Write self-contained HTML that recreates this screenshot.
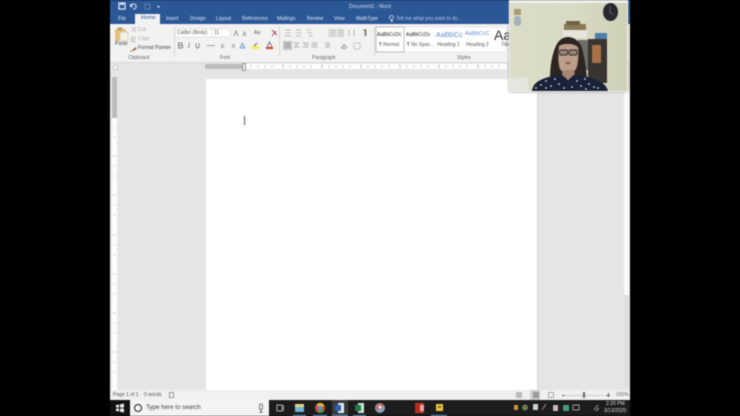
<!DOCTYPE html>
<html><head><meta charset="utf-8"><style>
html,body{margin:0;padding:0;background:#000;width:740px;height:416px;overflow:hidden}
body{position:relative;font-family:"Liberation Sans",sans-serif}
div{position:absolute;box-sizing:border-box}
.t{white-space:nowrap;line-height:1}
svg{position:absolute;left:0;top:0}
#w{left:0;top:0;width:740px;height:416px;filter:blur(.4px)}
</style></head><body><div id="w">
<div style="left:110px;top:0;width:520px;height:400px;background:#e6e5e6"></div>
<div style="left:110px;top:0;width:520px;height:24px;background:#2b5797"></div>
<div style="left:110px;top:24px;width:520px;height:38px;background:#f3f2f2"></div>
<div style="left:110px;top:62px;width:520px;height:1px;background:#d8d8d8"></div>
<div style="left:135px;top:14px;width:25px;height:10px;background:#f3f2f2"></div>
<div class="t" style="left:118px;top:17px;font-size:5px;color:#dfe6f2">File</div>
<div class="t" style="left:141px;top:16px;font-size:5.5px;color:#2b5797">Home</div>
<div class="t" style="left:166px;top:17px;font-size:5px;color:#dfe6f2">Insert</div>
<div class="t" style="left:190px;top:17px;font-size:5px;color:#dfe6f2">Design</div>
<div class="t" style="left:216px;top:17px;font-size:5px;color:#dfe6f2">Layout</div>
<div class="t" style="left:242px;top:17px;font-size:5px;color:#dfe6f2">References</div>
<div class="t" style="left:277px;top:17px;font-size:5px;color:#dfe6f2">Mailings</div>
<div class="t" style="left:307px;top:17px;font-size:5px;color:#dfe6f2">Review</div>
<div class="t" style="left:334px;top:17px;font-size:5px;color:#dfe6f2">View</div>
<div class="t" style="left:356px;top:17px;font-size:5px;color:#dfe6f2">MathType</div>
<div class="t" style="left:396px;top:17px;font-size:5px;color:#b9c9e2">Tell me what you want to do...</div>
<div class="t" style="left:349px;top:5px;font-size:5px;color:#d5deec">Document1 - Word</div>
<svg width="740" height="416" viewBox="0 0 740 416">
<rect x="119" y="3" width="6" height="6" fill="none" stroke="#e8eef7" stroke-width="1.2"/><rect x="120.5" y="3" width="3" height="2" fill="#e8eef7"/>
<path d="M131 7a2.6 2.6 0 1 1 2 2M130.500 4v2.500h2.500" fill="none" stroke="#e8eef7" stroke-width="1"/>
<rect x="145" y="4" width="5" height="5" fill="none" stroke="#6f8fbd" stroke-width=".8"/>
<path d="M157 6h3l-1.500 2z" fill="#dfe6f2"/>
<circle cx="391.500" cy="17.500" r="2" fill="none" stroke="#cfdcee" stroke-width=".8"/><path d="M391 20h1.500v2H391z" fill="#cfdcee"/>
<rect x="115" y="29" width="11" height="12" rx="1" fill="#e2c27a"/><rect x="120" y="32" width="8" height="9" fill="#f5f1e4" stroke="#bdb7a6" stroke-width=".5"/><rect x="117.500" y="27.500" width="5" height="2.500" fill="#b09a68"/>
<path d="M132 27l4 5M136 27l-4 5" stroke="#bdbcbc" stroke-width=".8"/>
<rect x="131" y="37" width="4" height="5" fill="#d9d8d8" stroke="#bcbcbc" stroke-width=".5"/>
<path d="M132 50l4-3 1 1-3 3z" fill="#8b6a3a"/><path d="M130 50.500l2-.5.500 1.500-2 .5z" fill="#c79e4a"/>
<rect x="175" y="29" width="55" height="8" fill="#fff" stroke="#d5d4d4" stroke-width=".6"/>
<rect x="211.500" y="29" width=".6" height="8" fill="#d5d4d4"/>
<path d="M234 36l2-5 2 5M243 36l1.500-4 1.500 4" fill="none" stroke="#777" stroke-width=".7"/>
<path d="M272 30l5 5M272 36l4-5" stroke="#b8405e" stroke-width="1"/>
<path d="M178.500 43h2.500a1.200 1.200 0 0 1 0 2.500h-2.500zM178.500 45.500h3a1.200 1.200 0 0 1 0 2.500h-3zM189.500 43l-1 5M196 43v3.500a1.500 1.500 0 0 0 3 0V43" fill="none" stroke="#666" stroke-width=".7"/>
<path d="M207 45.500h8" stroke="#888" stroke-width=".8"/>
<path d="M221 44l3 4M224 44l-3 4M232 44l3 4M235 44l-3 4" stroke="#777" stroke-width=".6"/>
<path d="M240 48l2.500-5 2.500 5z" fill="#cfe0f0" stroke="#5c8dc4" stroke-width=".7"/>
<rect x="252" y="46" width="7" height="3" fill="#f5ec4a"/><path d="M254 46l3-3" stroke="#667" stroke-width="1"/>
<path d="M267 47l2.500-5 2.500 5" fill="none" stroke="#555" stroke-width=".8"/><rect x="266" y="47" width="7" height="2" fill="#d03a2c"/>
<g stroke="#888" stroke-width=".6" fill="none">
<path d="M285 30h6M285 33h6M285 36h6M296 30h5M296 33h5M296 36h5M307 30h4M308 33h4M309 36h4"/>
<path d="M328 30h5M328 33h5M328 36h5M337 30h5M337 33h5M337 36h5"/>
<path d="M349 30v6M354 30v6"/>
</g>
<rect x="330" y="29" width="6" height="8" fill="#d4d3d3"/><rect x="338" y="29" width="6" height="8" fill="#d4d3d3"/>
<path d="M363 30h3v6M365 30v6" stroke="#555" stroke-width=".7" fill="none"/>
<rect x="283" y="41" width="9" height="9" fill="#c8c8c8"/>
<g stroke="#777" stroke-width=".6"><path d="M284.500 43h6M284.500 45h6M284.500 47h6M293.500 43h6M294.500 45h4M293.500 47h6M302.500 43h6M304 45h4.500M302.500 47h6M311.500 43h6M311.500 45h6M311.500 47h6M325 43h5M325 45h5M325 47h5"/></g>
<path d="M341 48l3-4 3 3-2 2z" fill="#cfcfcf" stroke="#777" stroke-width=".5"/>
<rect x="354" y="43" width="6" height="6" fill="none" stroke="#aaa" stroke-width=".6"/>
<g stroke="#c9c9c9" stroke-width=".6">
<path d="M174.500 26v30M279.500 26v30M374.500 26v30"/></g>
<rect x="376" y="27" width="130" height="25" fill="#fff" stroke="#dadada" stroke-width=".5"/>
<rect x="376" y="27" width="28" height="25" fill="#fff" stroke="#b0b0b0" stroke-width=".8"/>
</svg>
<div class="t" style="left:115px;top:42px;font-size:5px;color:#444">Paste</div>
<div class="t" style="left:138px;top:28px;font-size:5px;color:#aaa">Cut</div>
<div class="t" style="left:138px;top:37px;font-size:5px;color:#aaa">Copy</div>
<div class="t" style="left:138px;top:46px;font-size:5px;color:#444">Format Painter</div>
<div class="t" style="left:177px;top:31px;font-size:5px;color:#555">Calibri (Body)</div>
<div class="t" style="left:214px;top:31px;font-size:5px;color:#555">11</div>
<div class="t" style="left:254px;top:31px;font-size:5px;color:#555">Aa</div>
<div class="t" style="left:128px;top:56px;font-size:5px;color:#666">Clipboard</div>
<div class="t" style="left:220px;top:56px;font-size:5px;color:#666">Font</div>
<div class="t" style="left:312px;top:56px;font-size:5px;color:#666">Paragraph</div>
<div class="t" style="left:457px;top:56px;font-size:5px;color:#666">Styles</div>
<div class="t" style="left:377px;top:33px;font-size:5px;color:#222">AaBbCcDc</div>
<div class="t" style="left:406px;top:33px;font-size:5px;color:#222">AaBbCcDc</div>
<div class="t" style="left:436px;top:31px;font-size:7.300px;color:#5b8ec9">AaBbCc</div>
<div class="t" style="left:465px;top:32px;font-size:5.600px;color:#5b8ec9">AaBbCcC</div>
<div class="t" style="left:494px;top:28px;font-size:14px;color:#333">Aa</div>
<div class="t" style="left:379px;top:43px;font-size:5px;color:#555">¶ Normal</div>
<div class="t" style="left:407px;top:43px;font-size:5px;color:#555">¶ No Spac...</div>
<div class="t" style="left:437px;top:43px;font-size:5px;color:#555">Heading 1</div>
<div class="t" style="left:466px;top:43px;font-size:5px;color:#555">Heading 2</div>
<div class="t" style="left:501px;top:43px;font-size:5px;color:#555">Title</div>
<div style="left:205px;top:64px;width:302px;height:5px;background:#fdfdfd"></div>
<div style="left:205px;top:64px;width:39px;height:5px;background:#bdbcbc"></div>
<div style="left:242px;top:63px;width:4px;height:8px;border:1px solid #999;background:#eee"></div>
<svg width="740" height="416" viewBox="0 0 740 416"><g stroke="#999" stroke-width=".6">
<path d="M251 65.500v2M258 65.500v2M265 65.500v2M272 65.500v2M283 64.500v4M290 65.500v2M297 65.500v2M304 65.500v2M311 65.500v2M322 64.500v4M329 65.500v2M336 65.500v2M343 65.500v2M350 65.500v2M361 64.500v4M368 65.500v2M375 65.500v2M382 65.500v2M389 65.500v2M400 64.500v4M407 65.500v2M414 65.500v2M421 65.500v2M428 65.500v2M439 64.500v4M446 65.500v2M453 65.500v2M460 65.500v2M467 65.500v2M478 64.500v4M485 65.500v2M492 65.500v2M499 65.500v2"/>
</g></svg>
<div style="left:113px;top:65px;width:5px;height:5px;background:#fafafa;border:1px solid #c9c9c9"></div>
<div style="left:112px;top:77px;width:5px;height:313px;background:#fdfdfd"></div>
<div style="left:112px;top:77px;width:5px;height:41px;background:#bdbcbc"></div>
<svg width="740" height="416" viewBox="0 0 740 416"><g stroke="#aaa" stroke-width=".6">
<path d="M113.500 128h2M113.500 137h2M113 156h3M113.500 166h2M113.500 176h2M113 195h3M113.500 205h2M113.500 215h2M113 235h3M113.500 245h2M113.500 255h2M113 274h3M113.500 284h2M113.500 294h2M113 313h3M113.500 323h2M113.500 333h2M113 352h3M113.500 362h2M113.500 372h2"/>
</g></svg>
<div style="left:206px;top:79px;width:331px;height:311px;background:#fff"></div>
<div style="left:537px;top:79px;width:1px;height:311px;background:#dcdbdc"></div>
<div style="left:244px;top:116px;width:1px;height:9px;background:#555"></div>
<div style="left:624px;top:90px;width:5px;height:205px;background:#fafafa"></div>
<div style="left:624px;top:295px;width:5px;height:93px;background:#dfdedf"></div>
<div style="left:110px;top:390px;width:520px;height:10px;background:#f1f0f0"></div>
<div class="t" style="left:113px;top:393px;font-size:5px;color:#555">Page 1 of 1</div>
<div class="t" style="left:144px;top:393px;font-size:5px;color:#555">0 words</div>
<div style="left:169px;top:392px;width:5px;height:6px;border:1px solid #999"></div>
<div style="left:516px;top:392px;width:6px;height:6px;background:#bbb"></div>
<div style="left:530px;top:390px;width:10px;height:10px;background:#d0cfcf"></div>
<div style="left:533px;top:392px;width:6px;height:6px;background:#999"></div>
<div style="left:548px;top:392px;width:6px;height:6px;border:1px solid #aaa"></div>
<div style="left:562px;top:394.500px;width:3px;height:1px;background:#666"></div>
<div style="left:566px;top:395px;width:38px;height:1px;background:#ccc"></div>
<div style="left:583px;top:392px;width:2px;height:6px;background:#666"></div>
<div style="left:606px;top:393px;width:4px;height:4px;background:linear-gradient(#666,#666) center/4px 1px no-repeat,linear-gradient(#666,#666) center/1px 4px no-repeat"></div>
<div class="t" style="left:616px;top:393px;font-size:5px;color:#666">100%</div>
<div style="left:110px;top:400px;width:520px;height:16px;background:#1c1c1c"></div>
<div style="left:110px;top:400px;width:20px;height:16px;background:#111"></div>
<svg width="740" height="416" viewBox="0 0 740 416"><path d="M116 405l3-.5v3h-3zM120 404.300l4-.7v4h-4zM116 408.500h3v3l-3-.5zM120 408.500h4v4l-4-.7z" fill="#e8e8e8"/></svg>
<div style="left:130px;top:400px;width:139px;height:16px;background:#f3f3f3"></div>
<div style="left:134px;top:404px;width:8px;height:8px;border:1.300px solid #222;border-radius:50%"></div>
<div class="t" style="left:146px;top:405px;font-size:6.200px;color:#444">Type here to search</div>
<svg width="740" height="416" viewBox="0 0 740 416">
<rect x="259.500" y="404" width="3" height="5.500" rx="1.500" fill="none" stroke="#555" stroke-width=".8"/><path d="M261 409.500v2.500M259.500 412.300h3" stroke="#555" stroke-width=".8"/>
<rect x="277" y="405" width="5" height="6" fill="none" stroke="#ccc" stroke-width=".8"/><path d="M283.500 405v6" stroke="#ccc" stroke-width=".8"/>
<rect x="295" y="404" width="9" height="8" fill="#e8d480"/><rect x="295" y="407" width="9" height="5" fill="#6fb3d8"/>
<circle cx="320" cy="408" r="5" fill="#d5493b"/><path d="M320 408l4.500-2.500a5 5 0 0 0-8-1z" fill="#e0b93c"/><path d="M320 408l-2.500 4.300a5 5 0 0 0 6.800-1.800z" fill="#4a9e52"/><circle cx="320" cy="408" r="2" fill="#5a93d8"/>
<rect x="332" y="400" width="16" height="16" fill="#3a3a3c"/>
<rect x="338" y="403" width="6" height="10" fill="#dfe8f4"/><rect x="335" y="405" width="6" height="6" fill="#2b5fa8"/>
<rect x="358" y="403" width="6" height="10" fill="#cfe3d5"/><rect x="355" y="405" width="6" height="6" fill="#1f7a45"/>
<circle cx="380" cy="408" r="5" fill="#8aa0b8"/><path d="M376 410a5 5 0 0 1 8-5l-2 3z" fill="#d06060"/><circle cx="380" cy="407" r="1.500" fill="#eee"/>
<rect x="415" y="403" width="9" height="10" fill="#c8392b"/><rect x="417" y="405" width="7" height="6" fill="#e9a79f"/><rect x="415" y="404" width="5" height="8" fill="#b5281c"/>
<rect x="436" y="404" width="7" height="7" fill="#e6c840"/><rect x="438" y="406" width="3" height="2" fill="#7a6a20"/>
<rect x="514" y="405" width="4" height="5" fill="#c89640"/>
<circle cx="525" cy="407.500" r="3" fill="#5a8a50"/><circle cx="525" cy="407.500" r="1.200" fill="#c04040"/>
<rect x="533" y="404" width="5" height="6" fill="#c8d0d8"/>
<path d="M542 410l4-6" stroke="#b08090" stroke-width="1"/>
<rect x="553" y="405" width="5" height="6" fill="#c8b8c0"/>
<rect x="563" y="405" width="6" height="6" fill="#4a9a80"/>
<rect x="573" y="405" width="6" height="5" fill="none" stroke="#bbb" stroke-width=".8"/>
<path d="M594 410l4-5M596 411l3-3" stroke="#aaa" stroke-width=".9"/>
<g fill="#76a9d8"><rect x="293" y="415" width="13" height="1"/><rect x="313" y="415" width="14" height="1"/><rect x="332" y="415" width="16" height="1"/><rect x="353" y="415" width="13" height="1"/><rect x="431" y="415" width="16" height="1"/></g>
</svg>
<div class="t" style="left:606px;top:402px;font-size:5px;color:#ddd">2:20 PM</div>
<div class="t" style="left:604px;top:409px;font-size:5px;color:#ddd">3/13/2020</div>
<div style="left:509px;top:0;width:119px;height:92px;background:#f0f0ea;overflow:hidden;box-shadow:0 0 2px #888">
<svg width="117" height="88" viewBox="510 3 117 88" style="left:1px;top:3px">
<defs><linearGradient id="g" x1="0" x2="1" y1="0" y2="0"><stop offset="0" stop-color="#dcddc8"/><stop offset=".55" stop-color="#d9dac4"/><stop offset="1" stop-color="#cfd0b8"/></linearGradient></defs>
<rect x="509" y="0" width="119" height="92" fill="url(#g)"/>
<rect x="514" y="9" width="7" height="6" fill="#a89e72"/><rect x="514" y="16" width="7" height="10" rx="3" fill="#a4b0b8"/>
<ellipse cx="610.500" cy="12" rx="7.500" ry="9" fill="#26282e"/><path d="M610 6v6l3 3" stroke="#777" stroke-width=".7" fill="none"/>
<rect x="564" y="24" width="22" height="6" fill="#8a7a58"/><rect x="566" y="21" width="14" height="4" fill="#6f6248"/>
<rect x="563" y="30" width="24" height="8" fill="#e8e6dc"/>
<rect x="595" y="33" width="12" height="6" fill="#4a7fa8"/>
<rect x="588" y="39" width="19" height="44" fill="#3a3430"/><rect x="592" y="45" width="9" height="18" fill="#a8714a"/>
<rect x="578" y="40" width="10" height="30" fill="#6c6e68"/>
<rect x="510" y="78" width="18" height="13" fill="#e6e6e0"/>
<path d="M550 78c0-12 2-22 5-30 3-8 8-11 13-11s11 3 14 11c2 8 4 18 5 30z" fill="#2e2522"/>
<path d="M559 46c5-3 14-3 19 1 1 8 0 18-2 22-2 3-5 4-8 4s-6-1-8-4c-2-5-2-15-1-23z" fill="#bc9c8a"/>
<path d="M563 70h11l2 9h-15z" fill="#a98672"/>
<rect x="559.500" y="50" width="8" height="5" rx="1.500" fill="#9a8478" stroke="#2e2a2c" stroke-width=".9"/><rect x="569" y="50" width="8" height="5" rx="1.500" fill="#9a8478" stroke="#2e2a2c" stroke-width=".9"/>
<ellipse cx="568" cy="63" rx="2.500" ry="1.300" fill="#8f5a50"/>
<path d="M532 91c1-9 9-12 20-15l9-2 7 6 7-6 13 3c10 3 18 6 20 14z" fill="#1a2238"/>
<g fill="#d8dce4"><circle cx="541" cy="85" r=".9"/><circle cx="546" cy="81" r=".9"/><circle cx="551" cy="86" r=".9"/><circle cx="555" cy="79" r=".9"/><circle cx="559" cy="84" r=".9"/><circle cx="564" cy="88" r=".9"/><circle cx="572" cy="87" r=".9"/><circle cx="577" cy="81" r=".9"/><circle cx="581" cy="86" r=".9"/><circle cx="585" cy="79" r=".9"/><circle cx="589" cy="84" r=".9"/><circle cx="594" cy="87" r=".9"/><circle cx="598" cy="88" r=".9"/><circle cx="546" cy="88" r=".9"/><circle cx="536" cy="88" r=".9"/><circle cx="586" cy="89" r=".9"/></g>
</svg></div>
</div></body></html>
